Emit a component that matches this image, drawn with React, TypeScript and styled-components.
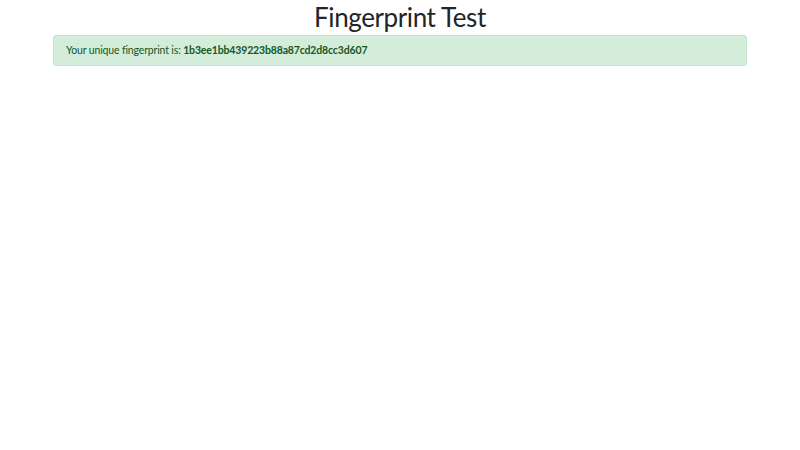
import * as React from "react";
import styled, { createGlobalStyle } from "styled-components";

const GlobalStyle = createGlobalStyle`
  body {
    margin: 0;
    background: #ffffff;
    font-family: Lato, "Open Sans", sans-serif;
    color: #212529;
  }
`;

const Container = styled.div`
  max-width: 694px;
  margin: 0 auto;
`;

const Title = styled.h1`
  margin: 0 0 3px;
  padding-top: 2px;
  font-size: 26px;
  font-weight: 400;
  letter-spacing: -0.4px;
  line-height: 30px;
  text-align: center;
  color: #212529;
`;

const Alert = styled.div`
  background-color: #d4edda;
  border: 1px solid #c3e6cb;
  border-radius: 3px;
  color: #155724;
  font-size: 10.5px;
  letter-spacing: -0.15px;
  line-height: 15px;
  padding: 7px 12px;
`;

const Hash = styled.strong`
  font-weight: 700;
`;

const App: React.FC = () => {
  return (
    <>
      <GlobalStyle />
      <Container>
        <Title>Fingerprint Test</Title>
        <Alert>
          Your unique fingerprint is: <Hash>1b3ee1bb439223b88a87cd2d8cc3d607</Hash>
        </Alert>
      </Container>
    </>
  );
};

export default App;
